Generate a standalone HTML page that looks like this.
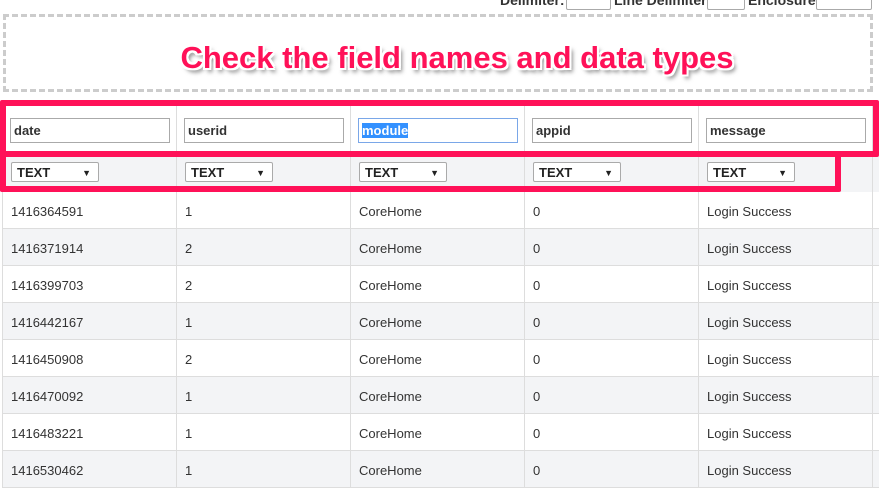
<!DOCTYPE html>
<html><head><style>
body{margin:0;width:879px;height:488px;overflow:hidden;background:#fff;font-family:"Liberation Sans",sans-serif;position:relative}
.a{position:absolute}
.top{top:-8px;font-size:14px;font-weight:bold;color:#333;white-space:nowrap}
.sel{border:1px solid #aaa;border-radius:2px;background:#fff;height:20px}
.dash{left:3px;top:14px;width:864px;height:72px;border:3px dashed #ccc}
.title{left:0;width:914px;top:40px;text-align:center;font-size:31px;font-weight:bold;color:#ff1158;text-shadow:-2px -2px 0 #fff,2px -2px 0 #fff,-2px 2px 0 #fff,2px 2px 0 #fff,0 2px 0 #fff,2px 0 0 #fff,3px 4px 4px rgba(0,0,0,.5)}
.vl{width:1px;background:#ddd;top:104px;height:384px}
.row{left:3px;width:876px;height:36px;border-bottom:1px solid #ddd;font-size:13px;color:#333}
.row span{position:absolute;top:12px}
.inp{width:155px;height:23px;border:1px solid #aaa;font-size:13px;font-weight:bold;color:#333;line-height:23px;padding-left:3px;box-sizing:content-box}
.ty{width:88px;height:20px;border:1px solid #aaa;border-radius:2px;background:#fff;font-size:13px;font-weight:bold;color:#222;line-height:20px;padding-left:5px;box-sizing:border-box}
.ty:after{content:"▼";position:absolute;right:7px;top:0;font-size:9px}
.pk{border:6px solid #ff1158;border-radius:2px}
</style></head><body>
<div class="a top" style="left:500px">Delimiter:</div>
<div class="a sel" style="left:566px;top:-12px;width:43px"></div>
<div class="a top" style="left:614px">Line Delimiter:</div>
<div class="a sel" style="left:707px;top:-12px;width:36px"></div>
<div class="a top" style="left:748px">Enclosure:</div>
<div class="a sel" style="left:816px;top:-12px;width:54px"></div>
<div class="a dash"></div>
<div class="a title">Check the field names and data types</div>

<div class="a" style="left:3px;top:104px;width:876px;height:51px;background:#fff;border-top:1px solid #ddd"></div>
<div class="a" style="left:3px;top:155px;width:876px;height:37px;background:#f3f4f6"></div>

<div class="a row" style="top:192px;background:#fff"><span style="left:8px">1416364591</span><span style="left:182px">1</span><span style="left:356px">CoreHome</span><span style="left:530px">0</span><span style="left:704px">Login Success</span></div>
<div class="a row" style="top:229px;background:#f3f4f6"><span style="left:8px">1416371914</span><span style="left:182px">2</span><span style="left:356px">CoreHome</span><span style="left:530px">0</span><span style="left:704px">Login Success</span></div>
<div class="a row" style="top:266px;background:#fff"><span style="left:8px">1416399703</span><span style="left:182px">2</span><span style="left:356px">CoreHome</span><span style="left:530px">0</span><span style="left:704px">Login Success</span></div>
<div class="a row" style="top:303px;background:#f3f4f6"><span style="left:8px">1416442167</span><span style="left:182px">1</span><span style="left:356px">CoreHome</span><span style="left:530px">0</span><span style="left:704px">Login Success</span></div>
<div class="a row" style="top:340px;background:#fff"><span style="left:8px">1416450908</span><span style="left:182px">2</span><span style="left:356px">CoreHome</span><span style="left:530px">0</span><span style="left:704px">Login Success</span></div>
<div class="a row" style="top:377px;background:#f3f4f6"><span style="left:8px">1416470092</span><span style="left:182px">1</span><span style="left:356px">CoreHome</span><span style="left:530px">0</span><span style="left:704px">Login Success</span></div>
<div class="a row" style="top:414px;background:#fff"><span style="left:8px">1416483221</span><span style="left:182px">1</span><span style="left:356px">CoreHome</span><span style="left:530px">0</span><span style="left:704px">Login Success</span></div>
<div class="a row" style="top:451px;background:#f3f4f6"><span style="left:8px">1416530462</span><span style="left:182px">1</span><span style="left:356px">CoreHome</span><span style="left:530px">0</span><span style="left:704px">Login Success</span></div>

<div class="a vl" style="left:2px"></div>
<div class="a vl" style="left:176px"></div>
<div class="a vl" style="left:350px"></div>
<div class="a vl" style="left:524px"></div>
<div class="a vl" style="left:698px"></div>
<div class="a vl" style="left:872px"></div>

<div class="a inp" style="left:10px;top:118px">date</div>
<div class="a inp" style="left:184px;top:118px">userid</div>
<div class="a inp" style="left:358px;top:118px;border-color:#7aa7e8"><span style="background:#3391ff;color:#fff">module</span></div>
<div class="a inp" style="left:532px;top:118px">appid</div>
<div class="a inp" style="left:706px;top:118px">message</div>

<div class="a ty" style="left:11px;top:162px">TEXT</div>
<div class="a ty" style="left:185px;top:162px">TEXT</div>
<div class="a ty" style="left:359px;top:162px">TEXT</div>
<div class="a ty" style="left:533px;top:162px">TEXT</div>
<div class="a ty" style="left:707px;top:162px">TEXT</div>

<div class="a pk" style="left:0;top:100px;width:867px;height:45px"></div>
<div class="a pk" style="left:0;top:151px;width:829px;height:35px;border-top:none;border-bottom-width:6px"></div>
</body></html>
